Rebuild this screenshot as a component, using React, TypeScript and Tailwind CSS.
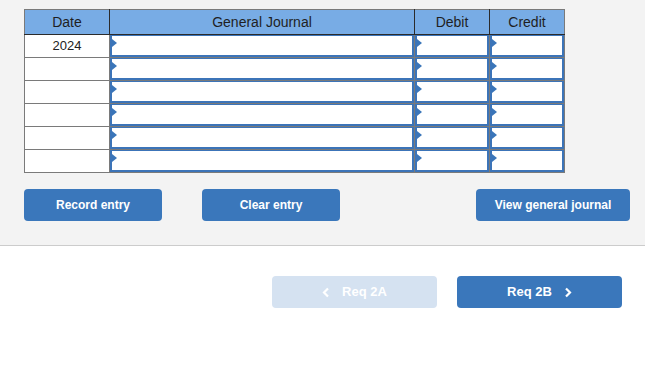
import React from 'react';

const rows = ['2024', '', '', '', '', ''];

function Marker() {
  return (
    <span className="absolute left-0 top-[3px] w-0 h-0 border-t-[4px] border-b-[4px] border-l-[5px] border-t-transparent border-b-transparent border-l-[#3a75b9]" />
  );
}

function InputCell() {
  return (
    <td className="border border-[#7a7a7a] p-0 h-[23px]">
      <div className="relative h-[22px] border-2 border-t border-[#3c74b8] bg-white">
        <Marker />
      </div>
    </td>
  );
}

export default function App() {
  return (
    <div className="w-[645px] h-[368px] bg-white" style={{ fontFamily: '"Liberation Sans", Arial, sans-serif' }}>
      <div className="bg-[#f3f3f3] border-b border-[#cccccc] h-[246px] pt-[9px] px-6">
        <table className="border-collapse border border-[#7a7a7a] text-[12px] text-[#222]">
          <thead>
            <tr className="bg-[#78ace5] h-[25px] text-[14px] text-[#1f1f1f]">
              <th className="w-[85px] border-b border-r border-[#2b2b2b] font-normal">Date</th>
              <th className="w-[305px] border-b border-r border-[#2b2b2b] font-normal">General Journal</th>
              <th className="w-[75px] border-b border-r border-[#2b2b2b] font-normal">Debit</th>
              <th className="w-[75px] border-b border-[#2b2b2b] font-normal">Credit</th>
            </tr>
          </thead>
          <tbody>
            {rows.map((d, i) => (
              <tr key={i} className="bg-white">
                <td className="border border-[#7a7a7a] text-center h-[23px] p-0 text-[13px]">{d}</td>
                <InputCell />
                <InputCell />
                <InputCell />
              </tr>
            ))}
          </tbody>
        </table>
        <div className="flex mt-4 text-white text-[12px] font-bold">
          <button className="w-[138px] h-8 bg-[#3a77bb] rounded-sm">Record entry</button>
          <button className="w-[138px] h-8 bg-[#3a77bb] rounded-sm ml-10">Clear entry</button>
          <button className="w-[154px] h-8 bg-[#3a77bb] rounded-sm ml-auto mr-[-9px]">View general journal</button>
        </div>
      </div>
      <div className="flex pt-[30px] pl-[272px] gap-5 text-white text-[13px] font-bold">
        <button className="w-[165px] h-8 bg-[#d5e2f1] rounded-sm flex items-center justify-center gap-3">
          <svg width="8" height="11" viewBox="0 0 8 11"><path d="M6 1.5 L2 5.5 L6 9.5" stroke="white" strokeWidth="2.2" fill="none" /></svg>
          Req 2A
        </button>
        <button className="w-[165px] h-8 bg-[#3a77bb] rounded-sm flex items-center justify-center gap-3">
          Req 2B
          <svg width="8" height="11" viewBox="0 0 8 11"><path d="M2 1.5 L6 5.5 L2 9.5" stroke="white" strokeWidth="2.2" fill="none" /></svg>
        </button>
      </div>
    </div>
  );
}
